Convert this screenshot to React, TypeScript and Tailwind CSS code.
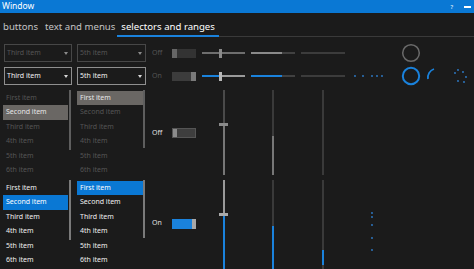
import React from "react";

const items = ["First item", "Second item", "Third item", "4th item", "5th item", "6th item"];

function Combo({ text, enabled, w }: { text: string; enabled: boolean; w: string }) {
  return (
    <div
      className={`ml-[4px] h-[18px] flex items-center justify-between pl-[2px] pr-[3px] border text-[7px] ${w} ${
        enabled ? "border-[#8f8f8f] text-[#f2f2f2]" : "border-[#474747] text-[#555555]"
      }`}
    >
      <span>{text}</span>
      <svg width="4" height="3" viewBox="0 0 4 3">
        <path d="M0 0 L4 0 L2 3 Z" fill={enabled ? "#d8d8d8" : "#8a8a8a"} />
      </svg>
    </div>
  );
}

function List({
  selected,
  enabled,
  second,
}: {
  selected: number;
  enabled: boolean;
  second: boolean;
}) {
  return (
    <div className="flex pt-[2px]">
      <div className={`mt-[1px] flex flex-col ${second ? "ml-[4px] w-[66px]" : "ml-[3px] w-[65px]"}`}>
        {items.map((t, i) => {
          const sel = i === selected;
          let cls = "";
          if (sel) cls = enabled ? "bg-[#0a78d4] text-white" : "bg-[#6a6764] text-[#e6e6e6]";
          else cls = enabled ? "text-[#f0f0f0]" : "text-[#555555]";
          return (
            <div key={t} className={`h-[14.4px] flex items-center pl-[3px] text-[7px] ${cls}`}>
              {t}
            </div>
          );
        })}
      </div>
      <div
        className={`w-[2px] ${second ? "h-[58px]" : "ml-[1px] h-[60px]"} ${
          enabled ? "bg-[#7a7a7a]" : "bg-[#5e5e5e]"
        }`}
      />
    </div>
  );
}

function Toggle({ on, variant }: { on: boolean; variant: "dis" | "en" }) {
  if (variant === "dis") {
    return (
      <div className={`w-[24px] h-[9px] flex ${on ? "justify-end bg-[#3c3c3c]" : "justify-start bg-[#333333]"}`}>
        <div className={`w-[5px] h-[9px] ${on ? "bg-[#7a7a7a]" : "bg-[#666666]"}`} />
      </div>
    );
  }
  return (
    <div
      className={`w-[24px] h-[10px] flex ${
        on ? "justify-end bg-[#1a82dc]" : "justify-start bg-[#3e3e3e] border border-[#555555]"
      }`}
    >
      <div className={`h-full ${on ? "w-[4px] bg-[#a8a8a8]" : "w-[4px] bg-[#8c8c8c]"}`} />
    </div>
  );
}

export default function App() {
  return (
    <div className="w-[474px] h-[269px] bg-[#1b1b1b] flex flex-col overflow-hidden font-['Noto_Sans','Open_Sans',sans-serif]">
      {/* title bar */}
      <div className="h-[13px] bg-[#0a78d4] flex items-center justify-between pl-[2px] pr-[3px] text-white">
        <span className="text-[8.5px] leading-none">Window</span>
        <div className="flex items-center gap-[11px]">
          <span className="text-[6px] leading-none">?</span>
          <div className="w-[7px] h-[2px] bg-white" />
        </div>
      </div>
      {/* tabs */}
      <div className="h-[24px] flex items-end">
        <div className="ml-[3px] h-[22px] pt-[7px] self-start flex items-center text-[#c4c4c4] text-[9.6px]">buttons</div>
        <div className="ml-[7px] h-[22px] pt-[7px] self-start flex items-center text-[#c4c4c4] text-[9.6px]">text and menus</div>
        <div className="ml-[2px] flex-1 flex">
          <div className="flex flex-col">
            <div className="px-[4px] h-[22px] pt-[7px] flex items-center text-white text-[9.6px]">selectors and ranges</div>
            <div className="h-[2px] bg-[#1a82dc]" />
          </div>
          <div className="flex-1 flex flex-col justify-end">
            <div className="h-[1px] bg-[#3a3a3a]" />
          </div>
        </div>
      </div>
      {/* content grid */}
      <div className="pt-[7px] grid grid-cols-[73px_75px_20px_30px_50px_50px_50px_40px_86px] grid-rows-[23px_21px_90px_91px] text-[7px]">
        {/* row 1 */}
        <div><Combo text="Third item" enabled={false} w="w-[68px]" /></div>
        <div><Combo text="5th item" enabled={false} w="w-[69px]" /></div>
        <div className="h-[18px] flex items-center pl-[4px] text-[#555555]">Off</div>
        <div className="h-[18px] flex items-center pl-[4px]"><Toggle on={false} variant="dis" /></div>
        <div className="h-[18px] flex items-center pl-[4px]">
          <div className="w-[43px] flex items-center">
            <div className="w-[17px] h-[2px] bg-[#6e6e6e]" />
            <div className="w-[3px] h-[9px] bg-[#8a8a8a]" />
            <div className="flex-1 h-[2px] bg-[#6e6e6e]" />
          </div>
        </div>
        <div className="h-[18px] flex items-center pl-[3px]">
          <div className="w-[44px] h-[2px] flex bg-[#414141]">
            <div className="w-[31px] h-full bg-[#8a8a8a]" />
          </div>
        </div>
        <div className="h-[18px] flex items-center pl-[3px]">
          <div className="w-[44px] h-[2px] bg-[#3c3c3c]" />
        </div>
        <div />
        <div className="h-[18px] flex items-center pl-[13px]">
          <svg width="20" height="20" viewBox="0 0 20 20">
            <circle cx="10" cy="10" r="8.3" fill="none" stroke="#6a6a6a" strokeWidth="1.5" />
          </svg>
        </div>

        {/* row 2 */}
        <div><Combo text="Third item" enabled={true} w="w-[68px]" /></div>
        <div><Combo text="5th item" enabled={true} w="w-[69px]" /></div>
        <div className="h-[18px] flex items-center pl-[4px] text-[#555555]">On</div>
        <div className="h-[18px] flex items-center pl-[4px]"><Toggle on={true} variant="dis" /></div>
        <div className="h-[18px] flex items-center pl-[4px]">
          <div className="w-[43px] flex items-center">
            <div className="w-[17px] h-[2px] bg-[#1a82dc]" />
            <div className="w-[3px] h-[9px] bg-[#b8b8b8]" />
            <div className="flex-1 h-[2px] bg-[#9a9a9a]" />
          </div>
        </div>
        <div className="h-[18px] flex items-center pl-[3px]">
          <div className="w-[44px] h-[2px] flex bg-[#414141]">
            <div className="w-[31px] h-full bg-[#1a82dc]" />
          </div>
        </div>
        <div className="h-[18px] flex items-center pl-[3px]">
          <div className="w-[44px] h-[2px] bg-[#3c3c3c]" />
        </div>
        <div className="h-[18px] flex items-center">
          <svg width="40" height="4" viewBox="0 0 40 4">
            {[7, 15, 24, 29, 34].map((x) => (
              <circle key={x} cx={x} cy="2" r="0.9" fill="#2f7fd0" />
            ))}
          </svg>
        </div>
        <div className="h-[18px] flex items-center pl-[13px] gap-[5px]">
          <svg width="20" height="20" viewBox="0 0 20 20">
            <circle cx="10" cy="10" r="8.2" fill="none" stroke="#1a82dc" strokeWidth="2" />
          </svg>
          <svg width="12" height="20" viewBox="0 0 12 20">
            <path d="M2 13 A9 9 0 0 1 8 3" fill="none" stroke="#1a82dc" strokeWidth="1.8" />
          </svg>
          <svg width="20" height="20" viewBox="0 0 20 20" className="ml-[9px]">
            {[
              [3, 7],
              [6, 4],
              [11, 6],
              [14, 11],
              [12, 16],
              [6, 15],
            ].map(([x, y], i) => (
              <circle key={i} cx={x} cy={y} r="0.9" fill="#2f7fd0" />
            ))}
          </svg>
        </div>

        {/* row 3 */}
        <div><List selected={1} enabled={false} second={false} /></div>
        <div><List selected={0} enabled={false} second={true} /></div>
        <div className="flex items-center pl-[4px] text-[#e0e0e0]">Off</div>
        <div className="flex items-center pl-[4px]"><Toggle on={false} variant="en" /></div>
        <div className="pt-[2px] pl-[21px]">
          <div className="w-[9px] h-[85px] flex flex-col items-center">
            <div className="w-[2px] h-[33px] bg-[#4a4a4a]" />
            <div className="w-[9px] h-[3px] bg-[#8a8a8a]" />
            <div className="w-[2px] flex-1 bg-[#777777]" />
          </div>
        </div>
        <div className="pt-[2px] pl-[24px]">
          <div className="w-[2px] h-[85px] flex flex-col">
            <div className="h-[46px] bg-[#3a3a3a]" />
            <div className="flex-1 bg-[#777777]" />
          </div>
        </div>
        <div className="pt-[2px] pl-[24px]">
          <div className="w-[2px] h-[85px] bg-[#3a3a3a]" />
        </div>
        <div />
        <div />

        {/* row 4 */}
        <div><List selected={1} enabled={true} second={false} /></div>
        <div><List selected={0} enabled={true} second={true} /></div>
        <div className="flex items-center pl-[4px] text-[#e0e0e0]">On</div>
        <div className="flex items-center pl-[4px]"><Toggle on={true} variant="en" /></div>
        <div className="pt-[2px] pl-[21px]">
          <div className="w-[9px] h-[89px] flex flex-col items-center">
            <div className="w-[2px] h-[33px] bg-[#9a9a9a]" />
            <div className="w-[9px] h-[3px] bg-[#aaaaaa]" />
            <div className="w-[2px] flex-1 bg-[#1a82dc]" />
          </div>
        </div>
        <div className="pt-[2px] pl-[24px]">
          <div className="w-[2px] h-[89px] flex flex-col">
            <div className="h-[46px] bg-[#3a3a3a]" />
            <div className="flex-1 bg-[#1a82dc]" />
          </div>
        </div>
        <div className="pt-[2px] pl-[24px]">
          <div className="w-[2px] h-[89px] flex flex-col">
            <div className="h-[70px] bg-[#3a3a3a]" />
            <div className="h-[15px] bg-[#1a82dc]" />
            <div className="flex-1 bg-[#3a3a3a]" />
          </div>
        </div>
        <div className="pl-[22px]">
          <svg width="4" height="91" viewBox="0 0 4 91">
            {[35, 39, 47, 60, 72].map((y) => (
              <circle key={y} cx="2" cy={y} r="0.9" fill="#2f7fd0" />
            ))}
          </svg>
        </div>
        <div />
      </div>
    </div>
  );
}
